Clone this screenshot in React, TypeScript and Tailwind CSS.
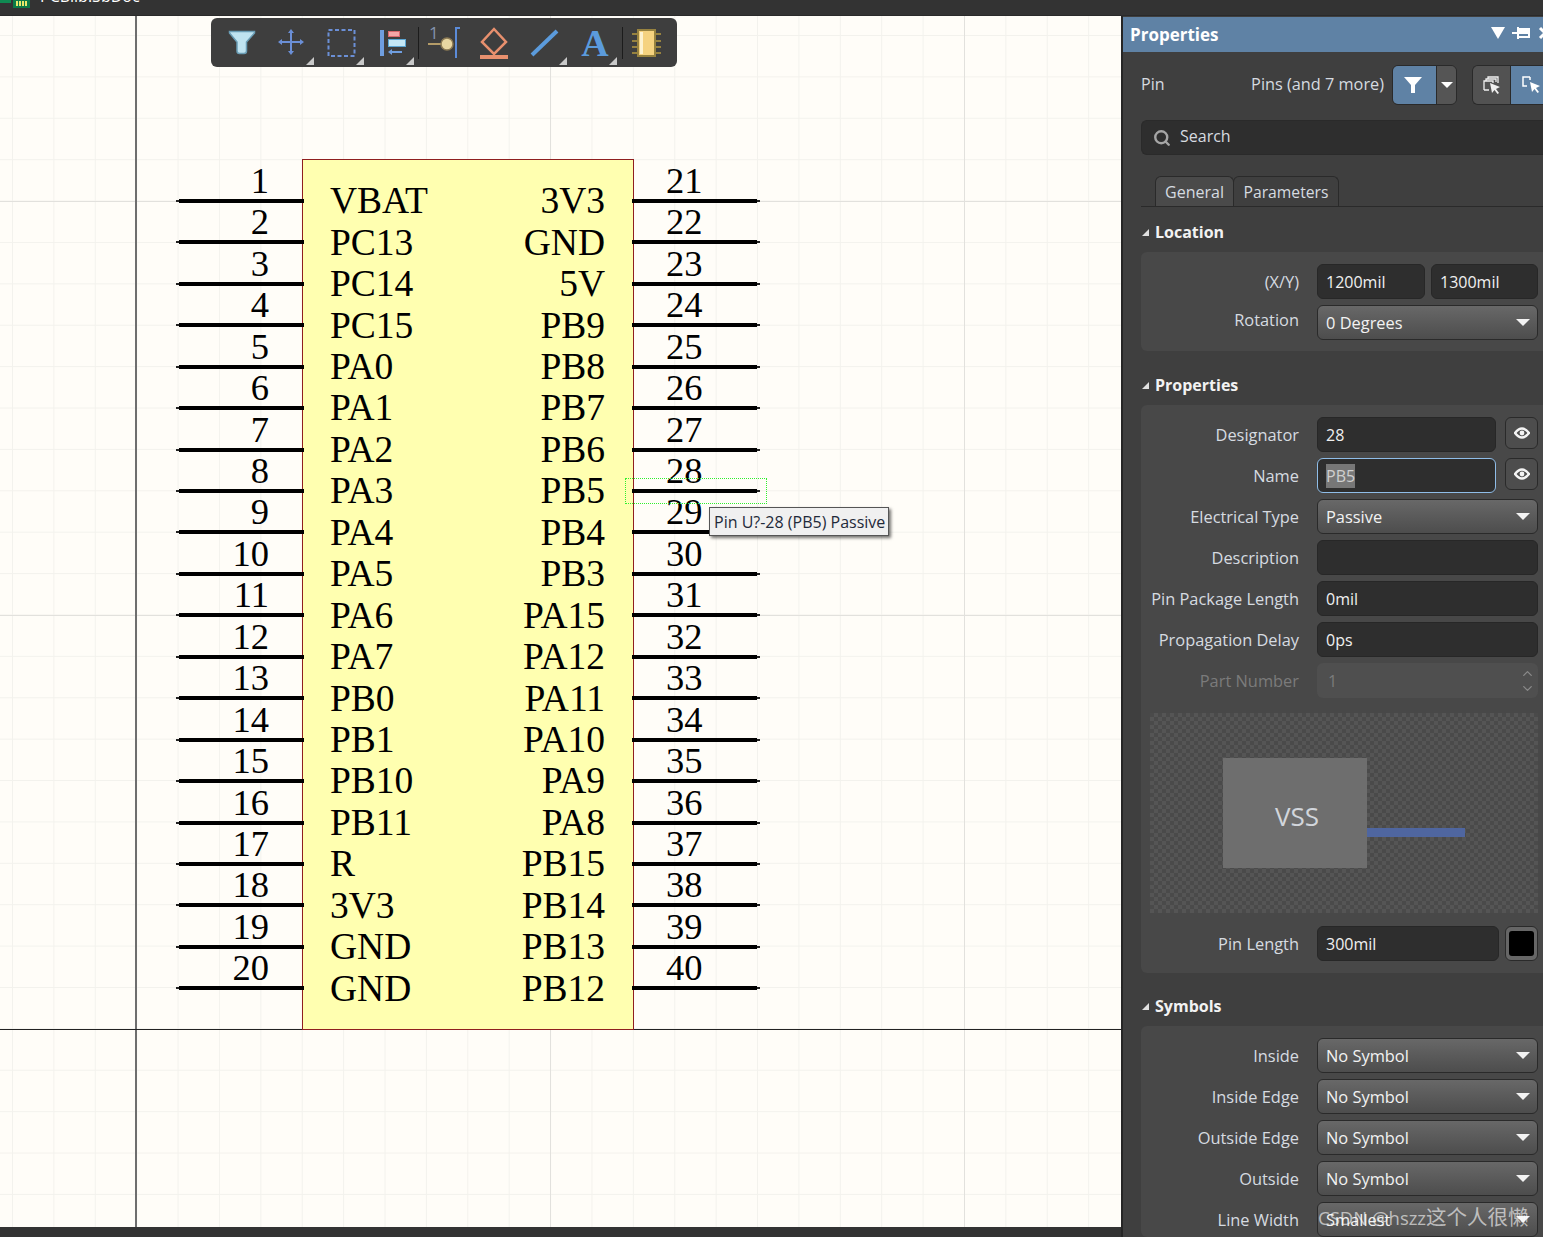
import { FC, ReactElement, ReactNode } from 'react';
import { Search, ChevronUp, ChevronDown } from 'lucide-react';

const leftPins = ['VBAT', 'PC13', 'PC14', 'PC15', 'PA0', 'PA1', 'PA2', 'PA3', 'PA4', 'PA5', 'PA6', 'PA7', 'PB0', 'PB1', 'PB10', 'PB11', 'R', '3V3', 'GND', 'GND'];
const rightPins = ['3V3', 'GND', '5V', 'PB9', 'PB8', 'PB7', 'PB6', 'PB5', 'PB4', 'PB3', 'PA15', 'PA12', 'PA11', 'PA10', 'PA9', 'PA8', 'PB15', 'PB14', 'PB13', 'PB12'];

const Corner: FC = () => <polygon points="47,37 47,45 39,45" fill="#c9c9c9" />;

const ToolIcon: FC<{ children: ReactNode; w?: number }> = ({ children, w = 50 }) => (
  <svg width={w} height="46" viewBox={`0 0 ${w} 46`} className="shrink-0">
    {children}
  </svg>
);

const Toolbar: FC = () => (
  <div className="absolute left-[211px] top-[2px] z-20 flex h-[49px] w-[466px] items-center rounded-md bg-[#3e3e3e] pl-[6px]">
    <ToolIcon>
      <path d="M12.5 11.5 H37.5 V13 L29.5 22 V31 Q29.5 33.5 27 33.5 H22.5 Q20 33.5 20 31 V22 L12.5 13 Z" fill="#bfe3f0" stroke="#6a9db5" strokeWidth="1.5" />
    </ToolIcon>
    <ToolIcon>
      <path d="M24 11 V33 M13 22 H35" stroke="#6b8fd6" strokeWidth="2" />
      <path d="M24 9 L27 13 H21 Z M24 35 L27 31 H21 Z M11 22 L15 19 V25 Z M37 22 L33 19 V25 Z" fill="#6b8fd6" />
      <Corner />
    </ToolIcon>
    <ToolIcon>
      <rect x="11.5" y="10" width="26" height="26" fill="none" stroke="#6b8fd6" strokeWidth="2" strokeDasharray="4 2.5" />
      <Corner />
    </ToolIcon>
    <ToolIcon>
      <rect x="13" y="10" width="4" height="26" fill="#6f9ee0" />
      <rect x="21.5" y="11.5" width="11" height="5" fill="#f4a6a8" stroke="#d9686e" />
      <rect x="21.5" y="19.5" width="17" height="7" fill="#c4e7f5" stroke="#5ca5d2" />
      <path d="M23 32 H35" stroke="#6f9ee0" strokeWidth="2" />
      <path d="M21 32 L25 29 V35 Z" fill="#6f9ee0" />
      <Corner />
    </ToolIcon>
    <div className="ml-px mr-px h-[32px] w-px shrink-0 bg-[#1c1c1c]" />
    <ToolIcon>
      <text x="9" y="19" fontSize="17" fill="#8493ad" fontFamily="'Open Sans', sans-serif">1</text>
      <path d="M8 24 H22" stroke="#b49c68" strokeWidth="2" />
      <circle cx="27" cy="24" r="6" fill="#e9d7a2" stroke="#8d7b55" strokeWidth="1.5" />
      <path d="M40 8 H36 V38" fill="none" stroke="#5b8bd8" strokeWidth="2" />
    </ToolIcon>
    <ToolIcon>
      <path d="M24 9 L36 22 L24 34 L12 22 Z" fill="none" stroke="#e8906e" strokeWidth="2.5" />
      <rect x="10" y="35" width="28" height="4" fill="#e8906e" />
    </ToolIcon>
    <ToolIcon>
      <path d="M12 35 L37 11" stroke="#5b9bdc" strokeWidth="4" />
      <Corner />
    </ToolIcon>
    <ToolIcon>
      <text x="25" y="36" textAnchor="middle" fontSize="38" fontWeight="700" fill="#5b9bdc" fontFamily="'Liberation Serif', serif">A</text>
      <Corner />
    </ToolIcon>
    <div className="ml-[2px] mr-px h-[32px] w-px shrink-0 bg-[#1c1c1c]" />
    <ToolIcon w={44}>
      <path d="M8 14 H37 M8 21 H37 M8 27 H37 M8 33 H37" stroke="#97823f" strokeWidth="2" />
      <rect x="14" y="10" width="17" height="26" fill="#f5d27f" stroke="#97823f" strokeWidth="2" />
      <rect x="16" y="12" width="3" height="22" fill="#fdf2cf" />
    </ToolIcon>
  </div>
);

const PinColumn: FC<{ side: 'left' | 'right'; start: number }> = ({ side, start }) => {
  const rows = Array.from({ length: 20 }, (_, i) => start + i);
  return (
    <div className="relative z-10 w-[128px] shrink-0 pt-[2.55px]">
      {rows.map((n) => (
        <div key={n} className="flex h-[41.45px] flex-col justify-end">
          <span className={side === 'left' ? 'pr-[35px] text-right text-[36.5px] leading-[36px]' : 'pl-[34px] text-left text-[36.5px] leading-[36px]'}>
            {n}
          </span>
          {side === 'left' ? (
            <div className="flex h-1 items-center">
              <div className="h-[2px] w-[3px] bg-[#222]" />
              <div className="h-[4px] flex-1 bg-black" />
            </div>
          ) : (
            <div className="flex h-1 items-center">
              <div className="h-[4px] flex-1 bg-black" />
              <div className="h-[2px] w-[3px] bg-[#222]" />
            </div>
          )}
        </div>
      ))}
    </div>
  );
};

const Symbol: FC = () => (
  <div className="absolute left-[176px] top-[143px] z-10 flex font-['Liberation_Serif',serif] text-black">
    <PinColumn side="left" start={1} />
    <div className="-mx-[2px] flex h-[871px] w-[332px] shrink-0 justify-between border border-[#8f1f1f] bg-[#ffffb0] pl-[27px] pr-[28px] pt-[20.3px] text-[37.5px]">
      <div>
        {leftPins.map((p, i) => (
          <div key={i} className="h-[41.45px] leading-[41.45px]">{p}</div>
        ))}
      </div>
      <div className="text-right">
        {rightPins.map((p, i) => (
          <div key={i} className="h-[41.45px] leading-[41.45px]">{p}</div>
        ))}
      </div>
    </div>
    <PinColumn side="right" start={21} />
  </div>
);

const Canvas: FC = () => (
  <div className="relative flex-1 overflow-hidden bg-[#fffdf8] bg-[image:linear-gradient(to_right,#e2e1dd_1px,transparent_1px),linear-gradient(to_bottom,#e2e1dd_1px,transparent_1px),linear-gradient(to_right,#f3f2ed_1px,transparent_1px),linear-gradient(to_bottom,#f3f2ed_1px,transparent_1px)] bg-[size:414px_414px,414px_414px,41.4px_41.4px,41.4px_41.4px] bg-[position:136px_0,0_185px,12px_0,0_19px]">
    <div className="absolute bottom-0 left-[135px] top-0 w-[2px] bg-[#6e6e6e]" />
    <div className="absolute left-0 right-0 top-[1013px] h-px bg-[#222]" />
    <Toolbar />
    <Symbol />
    <div className="absolute left-[625px] top-[462px] z-10 h-[26px] w-[142px] border border-dotted border-[#2ff02f]" />
    <div className="absolute left-[709px] top-[491px] z-20 flex h-[29px] w-[180px] items-center whitespace-nowrap border border-[#555] bg-[#f0f0f0] pl-[4px] font-['Open_Sans',sans-serif] text-[16px] text-[#1f2a3a] shadow-[2px_2px_3px_rgba(0,0,0,0.55)]">
      Pin U?-28 (PB5) Passive
    </div>
  </div>
);

const Caret: FC = () => (
  <svg width="14" height="8" viewBox="0 0 14 8" className="shrink-0">
    <path d="M0 0 H14 L7 7 Z" fill="#f2f2f2" />
  </svg>
);

const Row: FC<{ label: string; disabled?: boolean; raised?: boolean; children: ReactNode }> = ({ label, disabled, raised, children }) => (
  <div className="flex h-[35px] items-center">
    <div className={`w-[158px] shrink-0 text-right text-[16.4px] ${disabled ? 'text-[#7b7b7b]' : 'text-[#d6dbe0]'} ${raised ? 'pb-[4px]' : 'pt-[2px]'}`}>{label}</div>
    <div className="ml-[18px] flex h-full w-[221px] shrink-0 justify-between">{children}</div>
  </div>
);

const Input: FC<{ value?: string; width?: string }> = ({ value, width = 'w-full' }) => (
  <div className={`flex h-full items-center rounded-md border border-[#272727] bg-[#2e2e2e] pl-[8px] text-[#f0f0f0] ${width}`}>{value}</div>
);

const Select: FC<{ value: string }> = ({ value }) => (
  <div className="flex h-full w-full items-center justify-between rounded-md border border-[#2a2a2a] bg-gradient-to-b from-[#686868] to-[#4d4d4d] pl-[8px] pr-[7px] text-[16.4px] text-[#f2f2f2]">
    <span className="pt-[2px]">{value}</span>
    <Caret />
  </div>
);

const Eye: FC = () => (
  <div className="flex h-[32px] w-[33px] items-center justify-center rounded-md border border-[#2a2a2a] bg-[#4d4d4d]">
    <svg width="16" height="12" viewBox="0 0 16 12">
      <path d="M1 6 Q8 -3 15 6 Q8 15 1 6 Z" fill="none" stroke="#f4f4f4" strokeWidth="2.4" />
      <circle cx="8" cy="6" r="2.4" fill="#f4f4f4" />
    </svg>
  </div>
);

const Heading: FC<{ title: string; className: string }> = ({ title, className }) => (
  <div className={`flex items-center ${className}`}>
    <div className="flex h-10 items-center">
      <svg width="14" height="8" viewBox="0 0 14 8" className="shrink-0">
        <path d="M1 8 H8 V1 Z" fill="#e0e0e0" />
      </svg>
      <span className="text-[16px] font-bold text-[#f2f2f2]">{title}</span>
    </div>
  </div>
);

const Panel: FC = () => (
  <div className="relative w-[422px] shrink-0 overflow-hidden border-l-2 border-[#262626] bg-[#3f3f3f] pt-px font-['Open_Sans',sans-serif] text-[16px]">
    <div className="flex h-[35px] w-[420px] items-center justify-between bg-[#5f82a5] pl-[7px]">
      <span className="text-[17px] font-bold text-white">Properties</span>
      <div className="flex items-center pb-[3px]">
        <svg width="14" height="12" viewBox="0 0 14 12" className="shrink-0"><path d="M0 0 H14 L7 12 Z" fill="#fff" /></svg>
        <svg width="20" height="14" viewBox="0 0 20 14" className="ml-[7px] shrink-0"><path d="M0 7 H6 M6 3 H17 V11 H6 Z M6 1 V13" fill="none" stroke="#fff" strokeWidth="2" /><rect x="7" y="3" width="10" height="5" fill="#fff" /></svg>
        <svg width="14" height="14" viewBox="0 0 14 14" className="-mr-[9px] ml-[6px] shrink-0"><path d="M2 2 L12 12 M12 2 L2 12" stroke="#fff" strokeWidth="3" /></svg>
      </div>
    </div>
    <div className="ml-[18px] w-[402px]">
      <div className="mt-[13px] flex h-[40px] items-center text-[#d6dbe0]">
        <span className="w-[109px] shrink-0 pb-[2px]">Pin</span>
        <span className="w-[134px] shrink-0 whitespace-nowrap pb-[2px] text-right text-[16.3px]">Pins (and 7 more)</span>
        <div className="ml-[8px] flex h-full w-[65px] shrink-0 overflow-hidden rounded-md border border-[#2a2a2a]">
          <div className="flex w-[43px] items-center justify-center bg-[#5f82a5] pr-[3px]">
            <svg width="18" height="16" viewBox="0 0 18 16"><path d="M0 0 H18 L11 8 V16 H7 V8 Z" fill="#fff" /></svg>
          </div>
          <div className="flex flex-1 items-center justify-center border-l border-[#2a2a2a] bg-[#555]">
            <svg width="12" height="6" viewBox="0 0 12 6"><path d="M0 0 H12 L6 6 Z" fill="#fff" /></svg>
          </div>
        </div>
        <div className="ml-[15px] flex h-full w-[75px] shrink-0 overflow-hidden rounded-l-md border border-r-0 border-[#2a2a2a]">
          <div className="flex w-[38px] items-center justify-center border-r border-[#2a2a2a] bg-[#525252]">
            <svg width="18" height="18" viewBox="0 0 18 18">
              <path d="M5 3 V1 H15 V7 M3 5 V3 H13 V6 M1 14 V5 H10 V7 M1 14 H6" fill="none" stroke="#f0f0f0" strokeWidth="1.3" />
              <path d="M7 7 L17 11 L13 13 L16 17 L14.5 18 L11.5 14 L9 17 Z" fill="#f0f0f0" />
            </svg>
          </div>
          <div className="flex flex-1 items-center bg-[#5f82a5] pl-[11px]">
            <svg width="20" height="18" viewBox="0 0 20 18" className="shrink-0">
              <path d="M8 1 H1 V10 H5 M8 1 V4" fill="none" stroke="#fff" strokeWidth="1.5" />
              <path d="M8 6 L18 10 L14 12 L17 16 L15.5 17 L12.5 13 L10 16 Z" fill="#fff" />
            </svg>
          </div>
        </div>
      </div>
      <div className="mt-[15px] flex h-[35px] items-center rounded-l-md border border-r-0 border-[#2a2a2a] bg-[#2e2e2e] pl-[11px] text-[#d6dbe0]">
        <Search size={18} strokeWidth={3.2} className="text-[#a5a5a5]" />
        <span className="ml-[9px] pb-[3px]">Search</span>
      </div>
      <div className="mt-[21px] flex h-[31px] border-b border-[#2a2a2a] pl-[14px] text-[#d6dbe0]">
        <div className="flex w-[79px] items-center justify-center rounded-t-md border border-b-0 border-[#2a2a2a] bg-[#4a4a4a]">General</div>
        <div className="-ml-px flex w-[106px] items-center justify-center rounded-t-md border border-b-0 border-[#2a2a2a] pt-[2px] text-[15.7px]">Parameters</div>
      </div>

      <Heading title="Location" className="h-[45px] pt-[5px]" />
      <div className="flex h-[99px] flex-col gap-[6px] rounded-l-md bg-[#484848] pt-[12px]">
        <Row label="(X/Y)">
          <Input value="1200mil" width="w-[108px]" />
          <Input value="1300mil" width="w-[107px]" />
        </Row>
        <Row label="Rotation" raised><Select value="0 Degrees" /></Row>
      </div>

      <Heading title="Properties" className="h-[54px] pt-[14px]" />
      <div className="flex h-[568px] flex-col gap-[6px] rounded-l-md bg-[#484848] pt-[12px]">
        <Row label="Designator">
          <Input value="28" width="w-[179px]" />
          <Eye />
        </Row>
        <Row label="Name">
          <div className="flex h-full w-[179px] items-center rounded-md border border-[#8fbde8] bg-[#2e2e2e] pl-[8px]">
            <span className="bg-[#777] text-[#cfcfcf]">PB5</span>
          </div>
          <Eye />
        </Row>
        <Row label="Electrical Type"><Select value="Passive" /></Row>
        <Row label="Description"><Input /></Row>
        <Row label="Pin Package Length"><Input value="0mil" /></Row>
        <Row label="Propagation Delay"><Input value="0ps" /></Row>
        <Row label="Part Number" disabled>
          <div className="flex h-full w-full items-center justify-between rounded-md bg-[#4f4f4f] pl-[11px] pr-[3px] text-[#7b7b7b]">
            1
            <div className="flex flex-col text-[#8a8a8a]">
              <ChevronUp size={15} />
              <ChevronDown size={15} />
            </div>
          </div>
        </Row>
        <div className="ml-[9px] mt-[9px] flex h-[200px] w-[388px] shrink-0 bg-[repeating-conic-gradient(#555555_0_25%,#4a4a4a_0_50%)] bg-[length:8px_8px] pl-[73px] pt-[45px]">
          <div className="flex h-[110px] w-[144px] items-center justify-center bg-[#6e6e6e] pl-[4px] pt-[6px] text-[26px] text-[#d2d6dc]">VSS</div>
          <div className="mt-[70px] h-[9px] w-[98px] bg-[#4f66a0]" />
        </div>
        <div className="mt-[7px]">
          <Row label="Pin Length">
            <Input value="300mil" width="w-[182px]" />
            <div className="flex h-full w-[33px] items-center justify-center rounded-md border border-[#2a2a2a] bg-[#666]">
              <div className="h-[25px] w-[25px] rounded-[3px] bg-black" />
            </div>
          </Row>
        </div>
      </div>

      <Heading title="Symbols" className="h-[53px] pt-[13px]" />
      <div className="flex flex-col gap-[6px] rounded-l-md bg-[#484848] pt-[12px]">
        <Row label="Inside"><Select value="No Symbol" /></Row>
        <Row label="Inside Edge"><Select value="No Symbol" /></Row>
        <Row label="Outside Edge"><Select value="No Symbol" /></Row>
        <Row label="Outside"><Select value="No Symbol" /></Row>
        <Row label="Line Width"><Select value="Smallest" /></Row>
      </div>
    </div>
    <div className="absolute left-[195px] top-[1186px] z-30 flex items-baseline whitespace-nowrap font-['Open_Sans','Noto_Sans_CJK_SC',sans-serif] text-[#ffffff9c]">
      <span className="text-[18.5px]">CSDN @hszz</span>
      <span className="text-[20.5px]">这个人很懒</span>
    </div>
  </div>
);

const App: FC = (): ReactElement => {
  return (
    <div className="flex h-[1237px] w-[1543px] flex-col overflow-hidden bg-[#333]">
      <div className="relative h-4 shrink-0 overflow-hidden border-b border-[#2a2a2a] bg-[#333]">
        <div className="flex items-start">
          <div className="h-[3px] w-[11px] bg-[#0f8a52]" />
          <div className="ml-[2px] flex h-[8px] w-[17px] shrink-0 items-start justify-center gap-px bg-[#0d7a46] pt-px">
            <div className="h-[5px] w-[2px] bg-[#e8e86a]" />
            <div className="h-[5px] w-[2px] bg-[#e8e86a]" />
            <div className="h-[5px] w-[2px] bg-[#e8e86a]" />
            <div className="h-[5px] w-[2px] bg-[#e8e86a]" />
          </div>
          <div className="-mt-[15px] ml-[10px] font-['Open_Sans',sans-serif] text-[16px] leading-[22px] text-white">PCBlib.SbDoc</div>
        </div>
      </div>
      <div className="flex min-h-0 flex-1">
        <div className="flex w-[1121px] shrink-0 flex-col">
          <Canvas />
          <div className="h-[10px] shrink-0 bg-[#333]" />
        </div>
        <Panel />
      </div>
    </div>
  );
};

export default App;
